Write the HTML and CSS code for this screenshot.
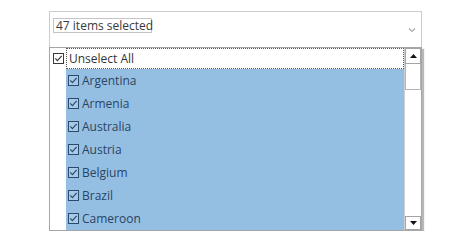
FILE: index.html
```html
<!DOCTYPE html>
<html>
<head>
<meta charset="utf-8">
<link rel="stylesheet" href="styles.css">
</head>
<body>
<div class="page">
  <div class="combo">
    <div class="field">47 items selected</div>
    <svg class="chev" width="8" height="6" viewBox="0 0 8 6"><path d="M1 1.5 L4 4.5 L7 1.5" fill="none" stroke="#a9a9a9" stroke-width="1.2"/></svg>
  </div>
  <div class="dropdown">
    <div class="list">
      <div class="row top">
        <svg class="cb" width="11" height="11" viewBox="0 0 11 11"><rect x="0.5" y="0.5" width="10" height="10" fill="#fff" stroke="#3a3a3a"/><path d="M2.3 5.4 L4.4 7.6 L8.7 2.9" fill="none" stroke="#3a3a3a" stroke-width="1.2"/></svg>
        <span class="label focus">Unselect All</span>
      </div>
      <div class="items">
        <div class="row item"><svg class="cb" width="11" height="11" viewBox="0 0 11 11"><rect x="0.5" y="0.5" width="10" height="10" fill="#a6cbe8" stroke="#2c4a6b"/><path d="M2.3 5.4 L4.4 7.6 L8.7 2.9" fill="none" stroke="#2c4a6b" stroke-width="1.2"/></svg><span>Argentina</span></div>
        <div class="row item"><svg class="cb" width="11" height="11" viewBox="0 0 11 11"><rect x="0.5" y="0.5" width="10" height="10" fill="#a6cbe8" stroke="#2c4a6b"/><path d="M2.3 5.4 L4.4 7.6 L8.7 2.9" fill="none" stroke="#2c4a6b" stroke-width="1.2"/></svg><span>Armenia</span></div>
        <div class="row item"><svg class="cb" width="11" height="11" viewBox="0 0 11 11"><rect x="0.5" y="0.5" width="10" height="10" fill="#a6cbe8" stroke="#2c4a6b"/><path d="M2.3 5.4 L4.4 7.6 L8.7 2.9" fill="none" stroke="#2c4a6b" stroke-width="1.2"/></svg><span>Australia</span></div>
        <div class="row item"><svg class="cb" width="11" height="11" viewBox="0 0 11 11"><rect x="0.5" y="0.5" width="10" height="10" fill="#a6cbe8" stroke="#2c4a6b"/><path d="M2.3 5.4 L4.4 7.6 L8.7 2.9" fill="none" stroke="#2c4a6b" stroke-width="1.2"/></svg><span>Austria</span></div>
        <div class="row item"><svg class="cb" width="11" height="11" viewBox="0 0 11 11"><rect x="0.5" y="0.5" width="10" height="10" fill="#a6cbe8" stroke="#2c4a6b"/><path d="M2.3 5.4 L4.4 7.6 L8.7 2.9" fill="none" stroke="#2c4a6b" stroke-width="1.2"/></svg><span>Belgium</span></div>
        <div class="row item"><svg class="cb" width="11" height="11" viewBox="0 0 11 11"><rect x="0.5" y="0.5" width="10" height="10" fill="#a6cbe8" stroke="#2c4a6b"/><path d="M2.3 5.4 L4.4 7.6 L8.7 2.9" fill="none" stroke="#2c4a6b" stroke-width="1.2"/></svg><span>Brazil</span></div>
        <div class="row item"><svg class="cb" width="11" height="11" viewBox="0 0 11 11"><rect x="0.5" y="0.5" width="10" height="10" fill="#a6cbe8" stroke="#2c4a6b"/><path d="M2.3 5.4 L4.4 7.6 L8.7 2.9" fill="none" stroke="#2c4a6b" stroke-width="1.2"/></svg><span>Cameroon</span></div>
      </div>
    </div>
    <div class="scroll">
      <div class="btn"><svg width="7" height="4" viewBox="0 0 7 4"><path d="M0 4 L3.5 0 L7 4 Z" fill="#111"/></svg></div>
      <div class="thumb"></div>
      <div class="track"></div>
      <div class="btn"><svg width="7" height="4" viewBox="0 0 7 4"><path d="M0 0 L3.5 4 L7 0 Z" fill="#111"/></svg></div>
    </div>
  </div>
</div>
</body>
</html>
```

FILE: styles.css
```css
html, body {
  margin: 0;
  padding: 0;
  background: #fff;
}
.page {
  padding: 11px 0 0 49px;
  font-family: "Open Sans", "Noto Sans", sans-serif;
  font-size: 12px;
}
.combo {
  box-sizing: border-box;
  width: 373px;
  height: 36px;
  border: 1px solid #cdcdcd;
  border-bottom: none;
  display: flex;
  align-items: flex-start;
  justify-content: space-between;
  padding: 6px 0 0 3px;
}
.field {
  box-sizing: border-box;
  width: 99px;
  height: 15px;
  border: 1px solid #c4c4c4;
  color: #3a3a3a;
  line-height: 13px;
  padding-left: 2px;
  white-space: nowrap;
}
.chev {
  margin: 9px 5px 0 0;
}
.dropdown {
  box-sizing: border-box;
  width: 373px;
  height: 184px;
  border: 1px solid #a6a6a6;
  box-shadow: 2px 2px 1px rgba(0, 0, 0, 0.28);
  display: flex;
  background: #fff;
}
.list {
  flex: 1;
  display: flex;
  flex-direction: column;
}
.row {
  display: flex;
  align-items: center;
}
.row.top {
  height: 21px;
  padding-left: 3px;
}
.row.top .cb {
  margin-right: 2px;
  margin-top: -1px;
}
.label {
  color: #333;
  flex: 1;
  align-self: stretch;
  display: flex;
  align-items: center;
  padding-left: 3px;
}
.focus {
  outline: 1px dotted #555;
  outline-offset: -1px;
}
.items {
  flex: 1;
  margin-left: 16px;
  background: #94bfe2;
}
.row.item {
  height: 23px;
  padding-left: 2px;
  color: #2b4462;
}
.row.item .cb {
  margin-right: 3px;
}
.scroll {
  width: 16px;
  display: flex;
  flex-direction: column;
  border-left: 1px solid #cfcfcf;
}
.btn {
  box-sizing: border-box;
  height: 16px;
  border: 1px solid #a4a4a4;
  display: flex;
  align-items: center;
  justify-content: center;
  background: #fff;
}
.btn:last-child {
  height: 14px;
}
.thumb {
  box-sizing: border-box;
  height: 26px;
  border: 1px solid #b4b4b4;
  border-top: none;
}
.track {
  flex: 1;
}
```
